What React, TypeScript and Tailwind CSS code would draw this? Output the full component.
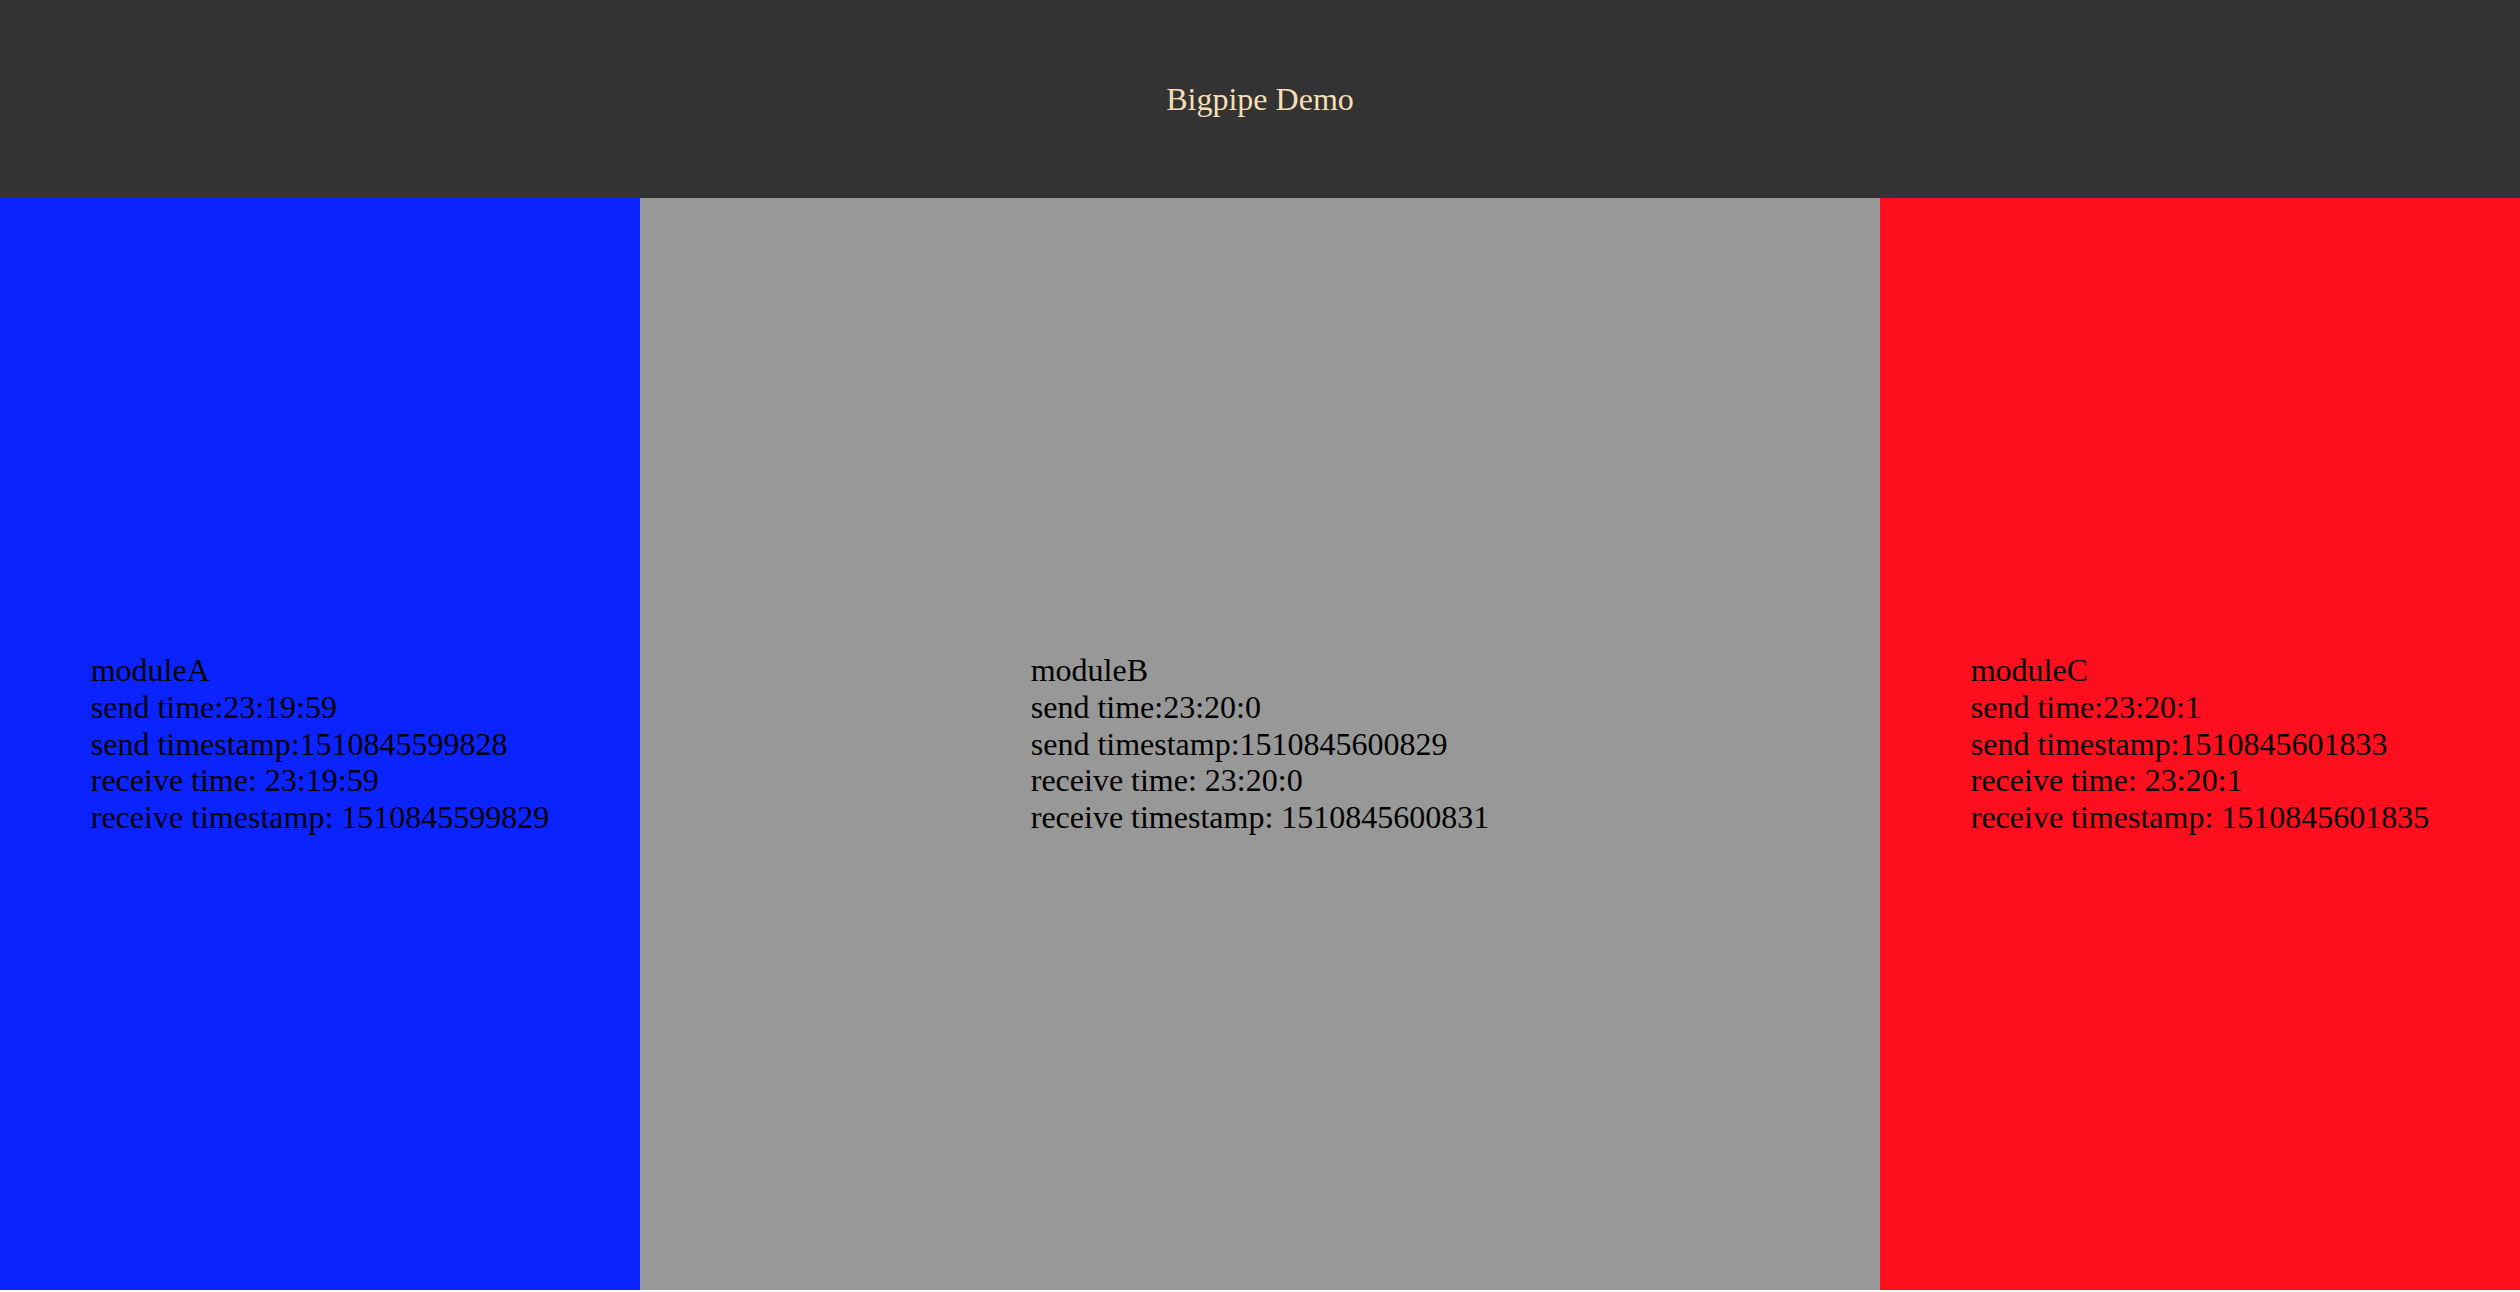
const MODULES = [
  {
    name: "moduleA",
    sendTime: "23:19:59",
    sendTs: "1510845599828",
    recvTime: "23:19:59",
    recvTs: "1510845599829",
    cls: "w-[640px] bg-[#0b24ff]",
  },
  {
    name: "moduleB",
    sendTime: "23:20:0",
    sendTs: "1510845600829",
    recvTime: "23:20:0",
    recvTs: "1510845600831",
    cls: "flex-1 bg-[#989898]",
  },
  {
    name: "moduleC",
    sendTime: "23:20:1",
    sendTs: "1510845601833",
    recvTime: "23:20:1",
    recvTs: "1510845601835",
    cls: "w-[640px] bg-[#ff0f1e]",
  },
];

export default function App() {
  return (
    <div className="w-[2520px] h-[1292px] bg-white font-['Liberation_Serif',serif] text-[32px] leading-[1.15]">
      <header className="h-[198px] bg-[#333333] flex items-center justify-center text-[#f5deb3]">
        Bigpipe Demo
      </header>
      <div className="flex h-[1092px]">
        {MODULES.map((m) => (
          <section key={m.name} className={`${m.cls} flex items-center justify-center text-black`}>
            <div>
              <div>{m.name}</div>
              <div>send time:{m.sendTime}</div>
              <div>send timestamp:{m.sendTs}</div>
              <div>receive time: {m.recvTime}</div>
              <div>receive timestamp: {m.recvTs}</div>
            </div>
          </section>
        ))}
      </div>
    </div>
  );
}
